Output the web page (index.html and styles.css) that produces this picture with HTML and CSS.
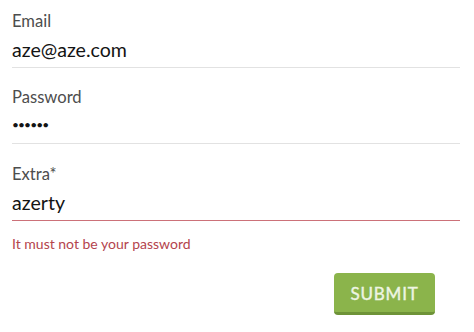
FILE: index.html
```html
<!DOCTYPE html>
<html>
<head>
<meta charset="utf-8">
<link rel="stylesheet" href="styles.css">
</head>
<body>
<form class="form">
  <div class="field first">
    <label class="label">Email</label>
    <div class="value">aze@aze.com</div>
  </div>
  <div class="field">
    <label class="label">Password</label>
    <div class="value dots">••••••</div>
  </div>
  <div class="field error">
    <label class="label">Extra*</label>
    <div class="value">azerty</div>
  </div>
  <div class="error-text">It must not be your password</div>
  <div class="actions">
    <button type="button" class="submit">SUBMIT</button>
  </div>
</form>
</body>
</html>
```
FILE: styles.css
```css
html, body {
  margin: 0;
  padding: 0;
  background: #ffffff;
}
body {
  font-family: Lato, "Open Sans", sans-serif;
  width: 474px;
  height: 332px;
  overflow: hidden;
}
.form {
  padding: 10px 14px 0 12px;
  display: flex;
  flex-direction: column;
}
.field {
  display: flex;
  flex-direction: column;
  border-bottom: 1px solid #e2e2e2;
  padding-bottom: 3px;
  margin-bottom: 19px;
}
.field.first {
  margin-bottom: 18px;
}
.label {
  font-size: 16.6px;
  color: #4d4d4d;
  line-height: 22px;
}
.value {
  font-size: 19.6px;
  color: #141414;
  line-height: 28px;
  margin-top: 4px;
}
.dots {
  font-size: 12px;
  letter-spacing: -0.9px;
  line-height: 26px;
  padding-bottom: 2px;
}
.field.error {
  border-bottom-color: #cc7179;
  margin-bottom: 13px;
}
.error-text {
  color: #b4444d;
  font-size: 14px;
  line-height: 20px;
}
.actions {
  display: flex;
  justify-content: flex-end;
  padding-right: 25px;
  margin-top: 19px;
}
.submit {
  width: 101px;
  height: 42px;
  background: #8bb44b;
  border: none;
  border-bottom: 3px solid #6e9338;
  border-radius: 4px;
  color: #eef5e2;
  font-family: Lato, sans-serif;
  font-size: 17px;
  font-weight: 400;
  -webkit-text-stroke: 0.4px #eef5e2;
  letter-spacing: 0.8px;
  padding: 2px 0 0 0;
}
```
